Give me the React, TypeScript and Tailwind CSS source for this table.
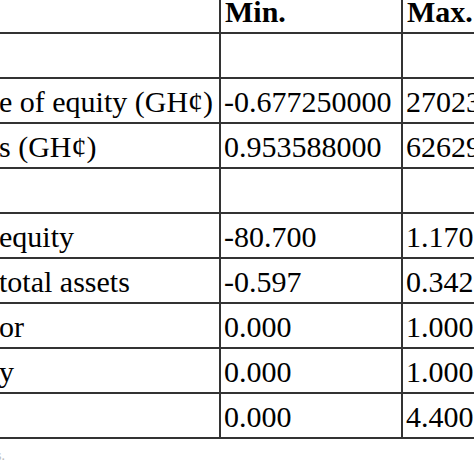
const rows: [string, string, string][] = [
  ['', '', ''],
  ['e of equity (GH¢)', '-0.677250000', '27023'],
  ['s (GH¢)', '0.953588000', '62629'],
  ['', '', ''],
  ['equity', '-80.700', '1.170'],
  ['total assets', '-0.597', '0.342'],
  ['or', '0.000', '1.000'],
  ['y', '0.000', '1.000'],
  ['', '0.000', '4.400'],
]

const cell = 'flex items-end overflow-hidden whitespace-nowrap pb-[5px] leading-none'

export default function App() {
  return (
    <div className="relative h-[474px] w-[474px] overflow-hidden bg-white font-['Liberation_Serif','Times_New_Roman',serif] text-[30px] text-black">
      <div className="grid h-[34px] grid-cols-[221px_182px_200px] border-b-2 border-[#333]">
        <div className={`${cell} border-r-2 border-[#333]`} />
        <div className={`${cell} border-r-2 border-[#333] pl-[4px] font-bold`}>Min.</div>
        <div className={`${cell} pl-[4px] font-bold`}>Max.</div>
      </div>

      {rows.map(([label, min, max], i) => (
        <div
          key={i}
          className="grid h-[45px] grid-cols-[221px_182px_200px] border-b-2 border-[#333]"
        >
          <div className={`${cell} border-r-2 border-[#333]`}>
            <span className="-ml-[1px]">{label}</span>
          </div>
          <div className={`${cell} border-r-2 border-[#333] pl-[3px]`}>{min}</div>
          <div className={`${cell} pl-[3px]`}>{max}</div>
        </div>
      ))}

      <p className="mt-[10px] -ml-[4px] text-[14px] leading-none text-[#bbb]">s.</p>
    </div>
  )
}
